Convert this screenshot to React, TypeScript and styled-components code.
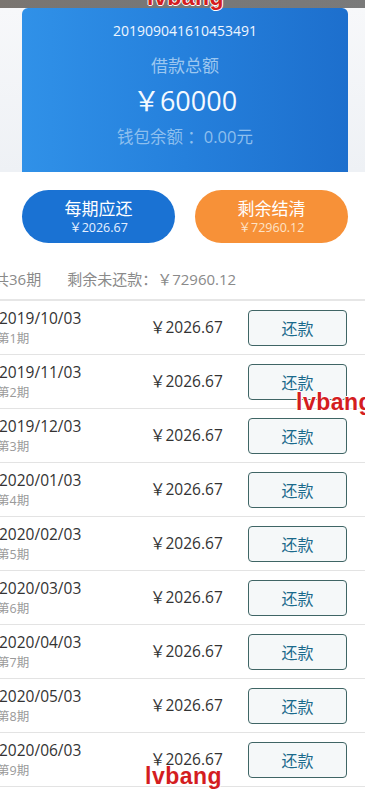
import React from "react";
import styled, { createGlobalStyle } from "styled-components";

const Global = createGlobalStyle`
  html, body { margin: 0; padding: 0; background: #fff; }
  body { width: 365px; height: 794px; overflow: hidden; position: relative;
    font-family: "Open Sans", "Noto Sans CJK SC", sans-serif; }
`;

const Page = styled.div`
  width: 380px;
  margin-left: -5px;
  position: relative;
`;

const TopBand = styled.div`
  height: 8px;
  background: linear-gradient(90deg, #7a7570, #777 40%, #7a7a7a);
`;

const Header = styled.div`
  background: linear-gradient(180deg, #f7f8fa 0%, #eef1f5 100%);
  padding: 0 27px;
`;

const Card = styled.div`
  height: 164px;
  border-radius: 6px 6px 0 0;
  background: linear-gradient(90deg, #3091e8 0%, #2580dc 50%, #1d6fcd 100%);
  display: flex;
  flex-direction: column;
  align-items: center;
  color: #fff;
`;

const OrderNo = styled.div`
  margin-top: 13px;
  font-size: 14px;
  line-height: 20px;
  color: #eef6ff;
`;

const Label = styled.div`
  margin-top: 13px;
  font-size: 17px;
  line-height: 24px;
  color: #9cc7f0;
`;

const Amount = styled.div`
  margin-top: 6px;
  font-size: 27px;
  line-height: 34px;
  color: #f4f9ff;
`;

const Wallet = styled.div`
  margin-top: 8px;
  font-size: 16.5px;
  line-height: 22px;
  color: #8dbfee;
`;

const Actions = styled.div`
  display: flex;
  gap: 20px;
  padding: 18px 27px 0;
`;

const Pill = styled.div<{ $bg: string; $sub: string }>`
  flex: 1;
  height: 53px;
  border-radius: 27px;
  background: ${(p) => p.$bg};
  display: flex;
  flex-direction: column;
  align-items: center;
  justify-content: center;
  color: #fff;
  .t { font-size: 17px; line-height: 21px; }
  .s { font-size: 12.5px; line-height: 17px; color: ${(p) => p.$sub}; }
`;

const Summary = styled.div`
  margin-top: 26px;
  font-size: 15px;
  line-height: 20px;
  color: #8a8a8a;
  margin-left: -1px;
  display: flex;
  gap: 26px;
  padding-bottom: 10px;
  border-bottom: 2px solid #e6e6e6;
`;

const List = styled.div``;

const Row = styled.div`
  height: 53px;
  border-bottom: 1px solid #e3e3e3;
  display: flex;
  align-items: center;
`;

const DateCol = styled.div`
  width: 151px;
  padding-left: 4px;
  display: flex;
  flex-direction: column;
  .d { font-size: 15.5px; line-height: 20px; color: #333; }
  .p { font-size: 12.5px; line-height: 18px; color: #9a9a9a; margin-top: 2px; margin-left: -2px; }
`;

const Money = styled.div`
  font-size: 15.5px;
  color: #333;
  margin-top: -3px;
`;

const PayBtn = styled.div`
  margin-left: auto;
  margin-right: 28px;
  width: 97px;
  height: 34px;
  border: 1px solid #3f6565;
  border-radius: 4px;
  background: #f5f8f9;
  color: #1b6a8c;
  font-size: 16px;
  display: flex;
  align-items: center;
  justify-content: center;
`;

const Mark = styled.div<{ $x: number; $y: number }>`
  position: absolute;
  left: ${(p) => p.$x}px;
  top: ${(p) => p.$y}px;
  font-family: "Liberation Sans", "DejaVu Sans", sans-serif;
  font-weight: 700;
  font-size: 23px;
  line-height: 24px;
  color: #d41d1f;
  letter-spacing: 0.5px;
  text-shadow: 1px 0 #fff, -1px 0 #fff, 0 1px #fff, 0 -1px #fff;
  z-index: 5;
`;

const rows = [
  ["2019/10/03", "第1期"],
  ["2019/11/03", "第2期"],
  ["2019/12/03", "第3期"],
  ["2020/01/03", "第4期"],
  ["2020/02/03", "第5期"],
  ["2020/03/03", "第6期"],
  ["2020/04/03", "第7期"],
  ["2020/05/03", "第8期"],
  ["2020/06/03", "第9期"],
];

export default function App() {
  return (
    <>
      <Global />
      <Page>
        <TopBand />
        <Header>
          <Card>
            <OrderNo>201909041610453491</OrderNo>
            <Label>借款总额</Label>
            <Amount>￥60000</Amount>
            <Wallet>钱包余额 ：0.00元</Wallet>
          </Card>
        </Header>
        <Actions>
          <Pill $bg="#1a72d3" $sub="#e6f0ff">
            <span className="t">每期应还</span>
            <span className="s">￥2026.67</span>
          </Pill>
          <Pill $bg="#f79138" $sub="#fde3c8">
            <span className="t">剩余结清</span>
            <span className="s">￥72960.12</span>
          </Pill>
        </Actions>
        <Summary>
          <span>共36期</span>
          <span>剩余未还款：￥72960.12</span>
        </Summary>
        <List>
          {rows.map(([d, p]) => (
            <Row key={d}>
              <DateCol>
                <span className="d">{d}</span>
                <span className="p">{p}</span>
              </DateCol>
              <Money>￥2026.67</Money>
              <PayBtn>还款</PayBtn>
            </Row>
          ))}
        </List>
      </Page>
      <Mark $x={147} $y={-15}>lvbang</Mark>
      <Mark $x={296} $y={390}>lvbang</Mark>
      <Mark $x={145} $y={764}>lvbang</Mark>
    </>
  );
}
